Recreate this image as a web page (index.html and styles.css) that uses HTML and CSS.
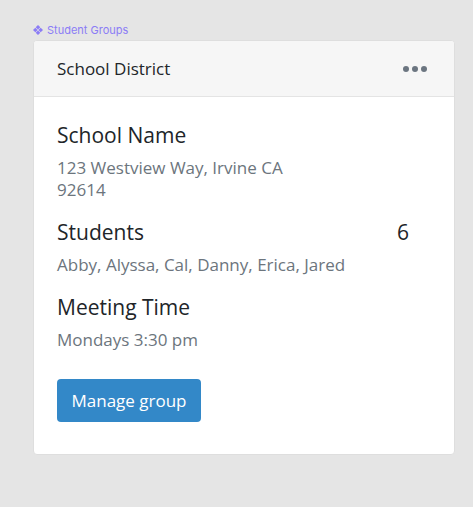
FILE: index.html
```html
<!DOCTYPE html>
<html>
<head>
<meta charset="utf-8">
<link rel="stylesheet" href="styles.css">
</head>
<body>
<div class="frame">
  <div class="label">
    <svg class="label-icon" width="10" height="10" viewBox="0 0 10 10"><path d="M5 0 L7.3 2.3 L5 4.6 L2.7 2.3 Z M2.3 2.7 L4.6 5 L2.3 7.3 L0 5 Z M7.7 2.7 L10 5 L7.7 7.3 L5.4 5 Z M5 5.4 L7.3 7.7 L5 10 L2.7 7.7 Z" fill="#8b7cf6"/></svg>
    <span>Student Groups</span>
  </div>
  <div class="card">
    <div class="card-header">
      <span class="header-title">School District</span>
      <span class="dots"><i></i><i></i><i></i></span>
    </div>
    <div class="card-body">
      <div class="section">
        <div class="heading">School Name</div>
        <div class="sub">123 Westview Way, Irvine CA<br>92614</div>
      </div>
      <div class="section">
        <div class="heading row"><span>Students</span><span class="count">6</span></div>
        <div class="sub">Abby, Alyssa, Cal, Danny, Erica, Jared</div>
      </div>
      <div class="section">
        <div class="heading">Meeting Time</div>
        <div class="sub">Mondays 3:30 pm</div>
      </div>
      <button class="btn">Manage group</button>
    </div>
  </div>
</div>
</body>
</html>
```

FILE: styles.css
```css
html, body {
  margin: 0;
  padding: 0;
  background: #e5e5e5;
}
body {
  font-family: "Open Sans", "Noto Sans", sans-serif;
  color: #212529;
}
.frame {
  padding: 22px 18px 0 33px;
}
.label {
  display: flex;
  align-items: center;
  gap: 4px;
  height: 16px;
  margin-bottom: 2px;
  font-family: Inter, sans-serif;
  font-size: 11px;
  color: #8b7cf6;
}
.card {
  width: 420px;
  background: #fff;
  border: 1px solid #dedede;
  border-radius: 4px;
  overflow: hidden;
}
.card-header {
  display: flex;
  justify-content: space-between;
  align-items: center;
  height: 55px;
  padding: 0 27px 0 23px;
  background: #f6f6f6;
  border-bottom: 1px solid #e4e4e4;
}
.header-title {
  font-size: 17px;
}
.dots {
  display: flex;
  gap: 3px;
}
.dots i {
  width: 6px;
  height: 6px;
  border-radius: 50%;
  background: #6b7580;
}
.card-body {
  padding: 24px 23px 32px 23px;
}
.section {
  margin-bottom: 17px;
}
.heading {
  font-size: 21px;
  line-height: 28px;
  margin-bottom: 8px;
}
.row {
  display: flex;
  justify-content: space-between;
}
.count {
  margin-right: 22px;
}
.sub {
  font-size: 17px;
  line-height: 22px;
  color: #6c757d;
}
.btn {
  display: block;
  margin-top: 28px;
  width: 144px;
  height: 43px;
  border: none;
  border-radius: 4px;
  background: #3388c8;
  color: #fff;
  font-family: inherit;
  font-size: 17px;
  padding: 0;
}
```
